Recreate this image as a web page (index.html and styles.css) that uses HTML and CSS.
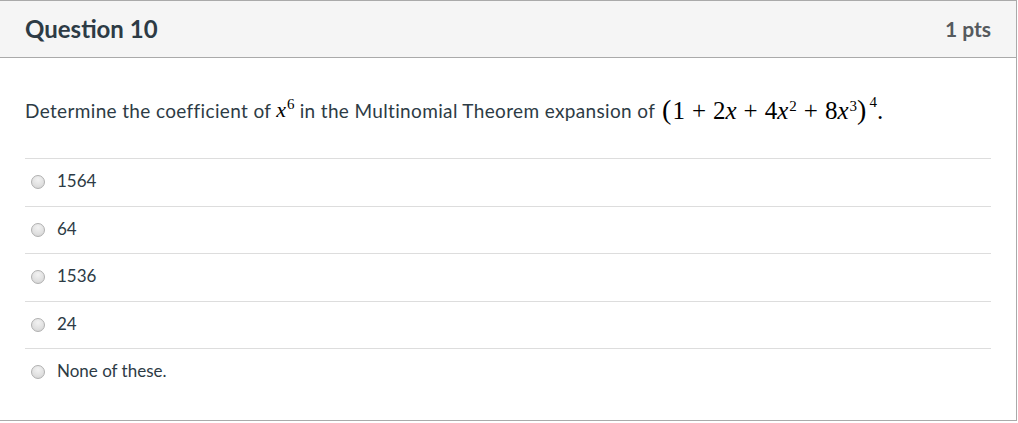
FILE: index.html
```html
<!DOCTYPE html>
<html>
<head>
<meta charset="utf-8">
<link rel="stylesheet" href="styles.css">
</head>
<body>
<div class="question">
  <div class="header">
    <h2 class="title">Question 10</h2>
    <span class="pts">1 pts</span>
  </div>
  <div class="content">
    <p class="text">Determine the coefficient of <span class="math"><i>x</i><sup>6</sup></span> in the Multinomial Theorem expansion of <span class="math big"><span class="paren">(</span>1<span class="op">+</span>2<i>x</i><span class="op">+</span>4<i>x</i><sup>2</sup><span class="op">+</span>8<i>x</i><sup>3</sup><span class="paren">)</span><sup class="outer">4</sup>.</span></p>
    <div class="answers">
      <label class="answer"><span class="radio"></span><span class="atext">1564</span></label>
      <label class="answer"><span class="radio"></span><span class="atext">64</span></label>
      <label class="answer"><span class="radio"></span><span class="atext">1536</span></label>
      <label class="answer"><span class="radio"></span><span class="atext">24</span></label>
      <label class="answer"><span class="radio"></span><span class="atext">None of these.</span></label>
    </div>
  </div>
</div>
</body>
</html>
```
FILE: styles.css
```css
html, body {
  margin: 0;
  padding: 0;
  background: #fff;
}
body {
  font-family: Lato, "Noto Sans", sans-serif;
  color: #2d3b45;
}
.question {
  width: 1016px;
  height: 419px;
  border-top: 1px solid #aaaaaa;
  border-right: 1px solid #aaaaaa;
  border-bottom: 1px solid #aaaaaa;
  display: flex;
  flex-direction: column;
}
.header {
  height: 56px;
  background: #f5f5f5;
  border-bottom: 1px solid #aaaaaa;
  display: flex;
  align-items: center;
  justify-content: space-between;
  padding: 0 25px 0 25px;
  box-sizing: content-box;
}
.title {
  margin: 0 0 1px 0;
  font-size: 24px;
  font-weight: 700;
  color: #2d3b45;
}
.pts {
  font-size: 21px;
  font-weight: 700;
  color: #555a5e;
  margin-bottom: 1px;
}
.content {
  padding: 0 25px 0 25px;
}
.text {
  margin: 0;
  height: 100px;
  display: flex;
  align-items: center;
  font-size: 19px;
  letter-spacing: 0.35px;
  white-space: pre;
  padding-top: 4px;
  box-sizing: border-box;
}
.math {
  font-family: "Liberation Serif", "DejaVu Serif", serif;
  font-size: 22px;
  letter-spacing: 0;
  color: #000;
  display: inline-flex;
  align-items: baseline;
}
.math i {
  font-style: italic;
}
.math sup {
  font-size: 15px;
  position: relative;
  top: -8px;
  line-height: 0;
  margin-left: 1px;
}
.math.big {
  font-size: 25px;
  margin-left: 2px;
}
.math .op {
  margin: 0 7px;
}
.math .paren {
  font-size: 28px;
  line-height: 1;
  margin-right: 1px;
}
.math sup.outer {
  top: -12px;
  margin-left: 2px;
}
.answers {
  display: flex;
  flex-direction: column;
}
.answer {
  display: flex;
  align-items: center;
  height: 47.5px;
  border-top: 1px solid #dddddd;
  box-sizing: border-box;
  font-size: 17px;
  padding-bottom: 3px;
}
.radio {
  width: 14px;
  height: 14px;
  box-sizing: border-box;
  border-radius: 50%;
  border: 1px solid #b0b0b0;
  background: radial-gradient(circle at 50% 30%, #f2f2f2 0%, #e0e0e0 60%, #cfcfcf 100%);
  margin-left: 6px;
  margin-right: 12px;
  margin-top: 3px;
}
.atext {
  color: #2d3b45;
}
```
